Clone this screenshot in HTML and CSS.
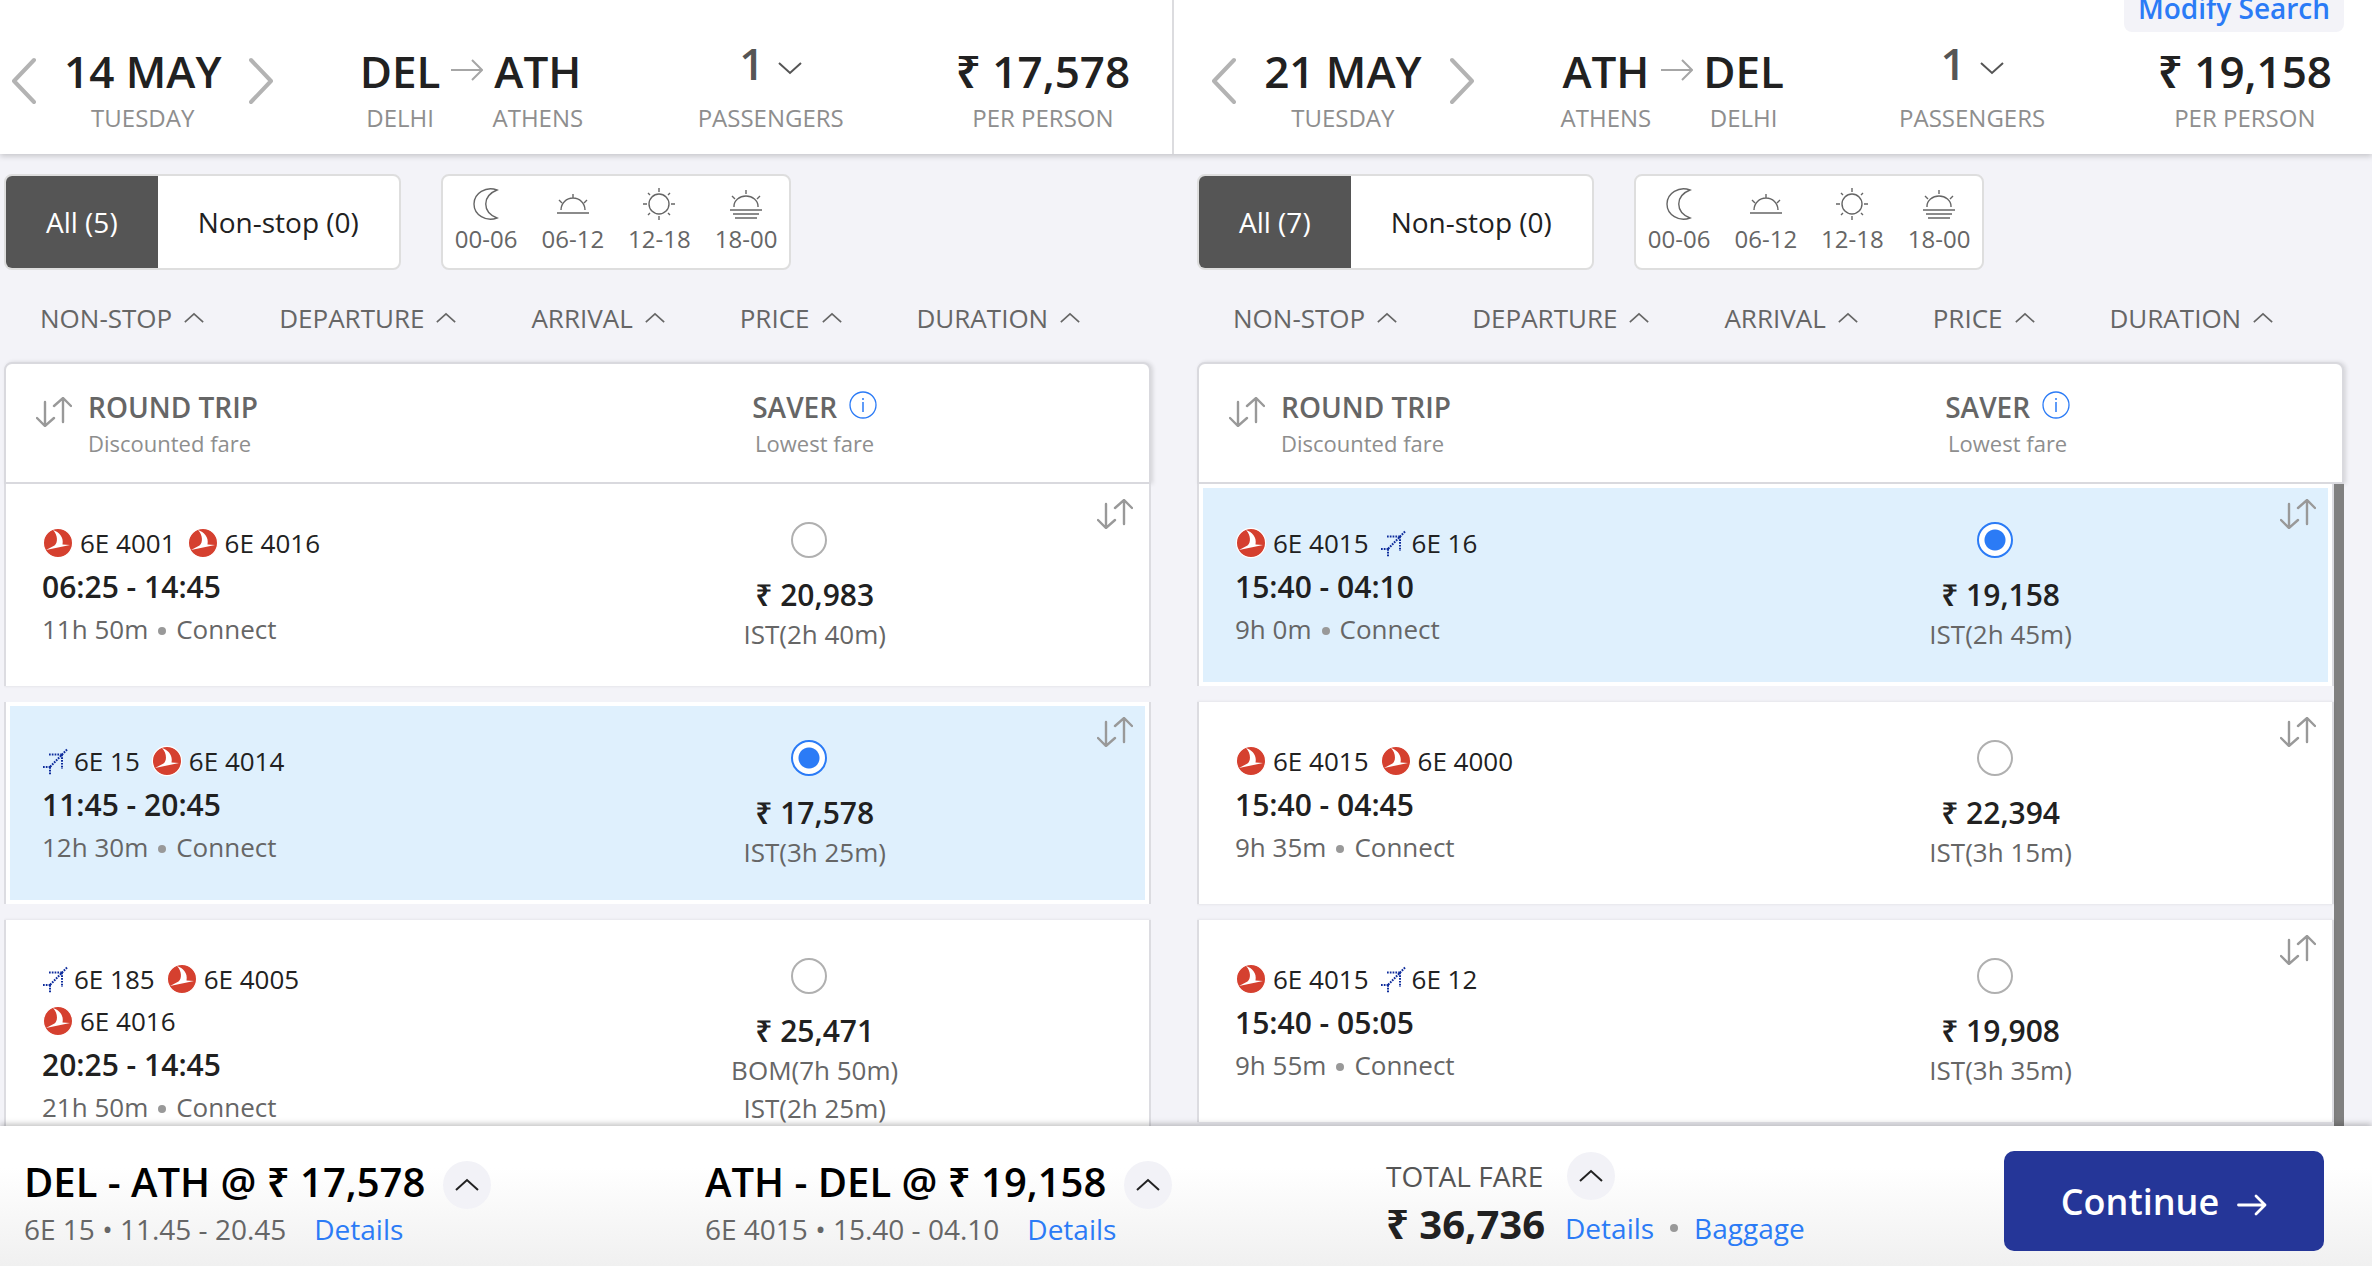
FILE: index.html
```html
<!DOCTYPE html>
<html lang="en">
<head>
<meta charset="utf-8">
<title>Select flights</title>
<link rel="stylesheet" href="styles.css">
</head>
<body>
<svg class="sprite" aria-hidden="true">
  <symbol id="chev-left" viewBox="0 0 24 48"><path d="M22 3 2 24 22 45" fill="none" stroke="currentColor" stroke-width="4" stroke-linecap="round" stroke-linejoin="round"/></symbol>
  <symbol id="chev-right" viewBox="0 0 24 48"><path d="M2 3 22 24 2 45" fill="none" stroke="currentColor" stroke-width="4" stroke-linecap="round" stroke-linejoin="round"/></symbol>
  <symbol id="chev-down" viewBox="0 0 24 14"><path d="M1 2 12 12 23 2" fill="none" stroke="currentColor" stroke-width="2"/></symbol>
  <symbol id="chev-up" viewBox="0 0 24 14"><path d="M1 12 12 2 23 12" fill="none" stroke="currentColor" stroke-width="2"/></symbol>
  <symbol id="arrow" viewBox="0 0 32 22"><path d="M0 11H31M21 1 31 11 21 21" fill="none" stroke="currentColor" stroke-width="2"/></symbol>
  <symbol id="arrow-bold" viewBox="0 0 30 22"><path d="M1.500 11H28M19 2 28 11 19 20" fill="none" stroke="currentColor" stroke-width="2.800" stroke-linecap="round" stroke-linejoin="round"/></symbol>
  <symbol id="swap" viewBox="0 0 36 30"><path d="M9 5V29M1 21 9 29 18 21M27 1V25M18 9 27 1 35 9" fill="none" stroke="currentColor" stroke-width="2.400" stroke-linecap="round"/></symbol>
  <symbol id="info" viewBox="0 0 28 28"><circle cx="14" cy="14" r="13" fill="none" stroke="currentColor" stroke-width="1.3"/><path d="M14 11V21M14 7V9" stroke="currentColor" stroke-width="1.5"/></symbol>
  <symbol id="moon" viewBox="0 0 32 32"><path d="M27 2C16-2 4 5 4 16S16 34 27 30C12 24 12 8 27 2Z" fill="none" stroke="currentColor" stroke-width="1.4"/></symbol>
  <symbol id="sunrise" viewBox="0 0 32 32"><path d="M0 25H32M4 22A12 12 0 0 1 28 22M16 6V10M2 12 5 15M30 12 27 15" fill="none" stroke="currentColor" stroke-width="1.4"/></symbol>
  <symbol id="sun" viewBox="0 0 32 32"><g fill="none" stroke="currentColor" stroke-width="1.4"><circle cx="16" cy="16" r="10"/><path d="M16 0V4M16 28V32M0 16H4M28 16H32M5 5 7 7M25 25 27 27M27 5 25 7M7 25 5 27"/></g></symbol>
  <symbol id="sunset" viewBox="0 0 32 32"><path d="M0 22H32M3 26H29M5 30H27M4 19V18A12 10 0 0 1 28 18V19M16 2V6M2 8 5 11M30 8 27 11" fill="none" stroke="currentColor" stroke-width="1.4"/></symbol>
  <symbol id="crane" viewBox="0 0 32 32"><circle cx="16" cy="16" r="14.6" fill="#d5402f" stroke="#fff" stroke-width="1.2"/><path d="M11 3C17 5 22 10 20.500 17.500L28 18 4 23 12.500 18.500C16 16 16 8 11 3Z" fill="#fff"/></symbol>
  <symbol id="dots" viewBox="0 0 26 27"><path d="M25 1.500 8 19M7 6.500H20M20 6.500V21M1 19H8M8 19V27" fill="none" stroke="#0e2c9c" stroke-width="2" stroke-dasharray="1.700 1.100"/></symbol>
</svg>

<header class="top">
  <section class="leg">
    <div class="date">
      <button class="step" aria-label="Previous day"><svg><use href="#chev-left"/></svg></button>
      <div class="stack"><strong class="big">14 MAY</strong><span class="cap">TUESDAY</span></div>
      <button class="step" aria-label="Next day"><svg><use href="#chev-right"/></svg></button>
    </div>
    <div class="route">
      <div class="stack"><strong class="big">DEL</strong><span class="cap">DELHI</span></div>
      <svg class="to"><use href="#arrow"/></svg>
      <div class="stack"><strong class="big">ATH</strong><span class="cap">ATHENS</span></div>
    </div>
    <div class="stack pax"><button class="count">1 <svg><use href="#chev-down"/></svg></button><span class="cap">PASSENGERS</span></div>
    <div class="stack price"><strong class="big">₹ 17,578</strong><span class="cap">PER PERSON</span></div>
  </section>
  <section class="leg leg--return">
    <div class="date">
      <button class="step" aria-label="Previous day"><svg><use href="#chev-left"/></svg></button>
      <div class="stack"><strong class="big">21 MAY</strong><span class="cap">TUESDAY</span></div>
      <button class="step" aria-label="Next day"><svg><use href="#chev-right"/></svg></button>
    </div>
    <div class="route">
      <div class="stack"><strong class="big">ATH</strong><span class="cap">ATHENS</span></div>
      <svg class="to"><use href="#arrow"/></svg>
      <div class="stack"><strong class="big">DEL</strong><span class="cap">DELHI</span></div>
    </div>
    <div class="stack pax"><button class="count">1 <svg><use href="#chev-down"/></svg></button><span class="cap">PASSENGERS</span></div>
    <div class="stack price"><strong class="big">₹ 19,158</strong><span class="cap">PER PERSON</span></div>
  </section>
  <button class="modify">Modify Search</button>
</header>

<main class="panes">
  <section class="pane">
    <div class="filters">
      <div class="tabs"><button class="tab tab--on">All (5)</button><button class="tab">Non-stop (0)</button></div>
      <div class="times">
        <button class="time"><svg><use href="#moon"/></svg>00-06</button>
        <button class="time"><svg><use href="#sunrise"/></svg>06-12</button>
        <button class="time"><svg><use href="#sun"/></svg>12-18</button>
        <button class="time"><svg><use href="#sunset"/></svg>18-00</button>
      </div>
    </div>
    <div class="sorts">
      <button class="sort">NON-STOP<svg><use href="#chev-up"/></svg></button>
      <button class="sort">DEPARTURE<svg><use href="#chev-up"/></svg></button>
      <button class="sort">ARRIVAL<svg><use href="#chev-up"/></svg></button>
      <button class="sort">PRICE<svg><use href="#chev-up"/></svg></button>
      <button class="sort">DURATION<svg><use href="#chev-up"/></svg></button>
    </div>
    <div class="head">
      <div class="trip"><svg class="swap"><use href="#swap"/></svg><div><h2 class="title">ROUND TRIP</h2><p class="note">Discounted fare</p></div></div>
      <div class="saver"><h2 class="title">SAVER<svg class="info"><use href="#info"/></svg></h2><p class="note">Lowest fare</p></div>
    </div>
    <div class="scroller">
      <div class="list">
        <label class="flight">
          <span class="info-col">
            <span class="codes"><span class="code"><svg class="crane"><use href="#crane"/></svg>6E 4001</span><span class="code"><svg class="crane"><use href="#crane"/></svg>6E 4016</span></span>
            <strong class="hours">06:25 - 14:45</strong>
            <span class="length">11h 50m<i class="dot"></i>Connect</span>
          </span>
          <span class="fare"><input class="pick" type="radio" name="out"><strong class="amount">₹ 20,983</strong><span class="stop">IST(2h 40m)</span></span>
          <svg class="swap"><use href="#swap"/></svg>
        </label>
        <label class="flight flight--on">
          <span class="info-col">
            <span class="codes"><span class="code"><svg class="dots"><use href="#dots"/></svg>6E 15</span><span class="code"><svg class="crane"><use href="#crane"/></svg>6E 4014</span></span>
            <strong class="hours">11:45 - 20:45</strong>
            <span class="length">12h 30m<i class="dot"></i>Connect</span>
          </span>
          <span class="fare"><input class="pick" type="radio" name="out" checked><strong class="amount">₹ 17,578</strong><span class="stop">IST(3h 25m)</span></span>
          <svg class="swap"><use href="#swap"/></svg>
        </label>
        <label class="flight">
          <span class="info-col">
            <span class="codes"><span class="code"><svg class="dots"><use href="#dots"/></svg>6E 185</span><span class="code"><svg class="crane"><use href="#crane"/></svg>6E 4005</span><span class="code"><svg class="crane"><use href="#crane"/></svg>6E 4016</span></span>
            <strong class="hours">20:25 - 14:45</strong>
            <span class="length">21h 50m<i class="dot"></i>Connect</span>
          </span>
          <span class="fare"><input class="pick" type="radio" name="out"><strong class="amount">₹ 25,471</strong><span class="stop">BOM(7h 50m)</span><span class="stop">IST(2h 25m)</span></span>
        </label>
      </div>
    </div>
  </section>

  <section class="pane">
    <div class="filters">
      <div class="tabs"><button class="tab tab--on">All (7)</button><button class="tab">Non-stop (0)</button></div>
      <div class="times">
        <button class="time"><svg><use href="#moon"/></svg>00-06</button>
        <button class="time"><svg><use href="#sunrise"/></svg>06-12</button>
        <button class="time"><svg><use href="#sun"/></svg>12-18</button>
        <button class="time"><svg><use href="#sunset"/></svg>18-00</button>
      </div>
    </div>
    <div class="sorts">
      <button class="sort">NON-STOP<svg><use href="#chev-up"/></svg></button>
      <button class="sort">DEPARTURE<svg><use href="#chev-up"/></svg></button>
      <button class="sort">ARRIVAL<svg><use href="#chev-up"/></svg></button>
      <button class="sort">PRICE<svg><use href="#chev-up"/></svg></button>
      <button class="sort">DURATION<svg><use href="#chev-up"/></svg></button>
    </div>
    <div class="head">
      <div class="trip"><svg class="swap"><use href="#swap"/></svg><div><h2 class="title">ROUND TRIP</h2><p class="note">Discounted fare</p></div></div>
      <div class="saver"><h2 class="title">SAVER<svg class="info"><use href="#info"/></svg></h2><p class="note">Lowest fare</p></div>
    </div>
    <div class="scroller">
      <div class="list">
        <label class="flight flight--on">
          <span class="info-col">
            <span class="codes"><span class="code"><svg class="crane"><use href="#crane"/></svg>6E 4015</span><span class="code"><svg class="dots"><use href="#dots"/></svg>6E 16</span></span>
            <strong class="hours">15:40 - 04:10</strong>
            <span class="length">9h 0m<i class="dot"></i>Connect</span>
          </span>
          <span class="fare"><input class="pick" type="radio" name="back" checked><strong class="amount">₹ 19,158</strong><span class="stop">IST(2h 45m)</span></span>
          <svg class="swap"><use href="#swap"/></svg>
        </label>
        <label class="flight">
          <span class="info-col">
            <span class="codes"><span class="code"><svg class="crane"><use href="#crane"/></svg>6E 4015</span><span class="code"><svg class="crane"><use href="#crane"/></svg>6E 4000</span></span>
            <strong class="hours">15:40 - 04:45</strong>
            <span class="length">9h 35m<i class="dot"></i>Connect</span>
          </span>
          <span class="fare"><input class="pick" type="radio" name="back"><strong class="amount">₹ 22,394</strong><span class="stop">IST(3h 15m)</span></span>
          <svg class="swap"><use href="#swap"/></svg>
        </label>
        <label class="flight">
          <span class="info-col">
            <span class="codes"><span class="code"><svg class="crane"><use href="#crane"/></svg>6E 4015</span><span class="code"><svg class="dots"><use href="#dots"/></svg>6E 12</span></span>
            <strong class="hours">15:40 - 05:05</strong>
            <span class="length">9h 55m<i class="dot"></i>Connect</span>
          </span>
          <span class="fare"><input class="pick" type="radio" name="back"><strong class="amount">₹ 19,908</strong><span class="stop">IST(3h 35m)</span></span>
          <svg class="swap"><use href="#swap"/></svg>
        </label>
      </div>
      <div class="bar"></div>
    </div>
  </section>
</main>

<footer class="summary">
  <section class="pickup">
    <div class="line"><strong class="sum">DEL - ATH @ ₹ 17,578</strong><button class="open" aria-label="Expand"><svg><use href="#chev-up"/></svg></button></div>
    <div class="meta">6E 15 • 11.45 - 20.45<a class="link" href="#">Details</a></div>
  </section>
  <section class="pickup">
    <div class="line"><strong class="sum">ATH - DEL @ ₹ 19,158</strong><button class="open" aria-label="Expand"><svg><use href="#chev-up"/></svg></button></div>
    <div class="meta">6E 4015 • 15.40 - 04.10<a class="link" href="#">Details</a></div>
  </section>
  <section class="total">
    <div class="line"><span class="total-cap">TOTAL FARE</span><button class="open" aria-label="Expand"><svg><use href="#chev-up"/></svg></button></div>
    <div class="total-row"><strong class="total-sum">₹ 36,736</strong><a class="link" href="#">Details</a><i class="dot"></i><a class="link" href="#">Baggage</a></div>
  </section>
  <button class="go">Continue<svg><use href="#arrow-bold"/></svg></button>
</footer>
</body>
</html>
```
FILE: styles.css
```css
* { box-sizing: border-box; }

body {
  margin: 0;
  height: 100vh;
  display: flex;
  flex-direction: column;
  overflow: hidden;
  background: #f3f3f8;
  color: #212121;
  font-family: "Open Sans", "Noto Sans", sans-serif;
  font-size: 26px;
}

button {
  margin: 0;
  padding: 0;
  border: 0;
  background: none;
  color: inherit;
  font: inherit;
  cursor: pointer;
}

h2, p { margin: 0; }
a { color: #2b7bf6; text-decoration: none; }
svg { display: block; flex: none; }
strong { font-weight: 600; }
.sprite { position: absolute; width: 0; height: 0; }

/* Search header */
.top {
  position: relative;
  z-index: 2;
  display: grid;
  grid-template-columns: 495fr 505fr;
  flex: none;
  background: #fff;
  box-shadow: 0 2px 6px rgba(0, 0, 0, .2);
}
.leg {
  display: grid;
  grid-template-columns: 349fr 337fr 261fr 173fr;
  justify-items: start;
  padding: 41px 42px 19px 12px;
  border-right: 2px solid #dcdcdf;
  white-space: nowrap;
}
.leg--return { padding: 41px 40px 19px 38px; border-right: 0; }
.date { display: flex; gap: 28px; }
.step { align-self: flex-start; margin-top: 16px; color: #b3b3b3; }
.step svg { width: 24px; height: 48px; }
.stack { display: flex; flex-direction: column; align-items: center; }
.big { font-size: 44px; line-height: 60px; }
.cap { color: #8e8e8e; font-size: 24px; line-height: 34px; }
.route { display: flex; gap: 10px; }
.to { width: 32px; height: 22px; margin-top: 18px; color: #a6a6a6; }
.pax { margin-left: 2px; }
.count {
  display: flex;
  align-items: center;
  gap: 14px;
  margin-bottom: 16px;
  color: #555;
  font-size: 44px;
  font-weight: 600;
  line-height: 44px;
}
.count svg { width: 24px; height: 14px; margin-top: 10px; }
.price { justify-self: end; }
.modify {
  position: absolute;
  top: -16px;
  right: 28px;
  width: 220px;
  height: 48px;
  border-radius: 8px;
  background: #f3f3f8;
  color: #2b7bf6;
  font-size: 28px;
  font-weight: 600;
  white-space: nowrap;
}

/* Result panes */
.panes {
  display: grid;
  grid-template-columns: 1fr 1fr;
  grid-template-rows: minmax(0, 1fr);
  gap: 46px;
  flex: 1;
  min-height: 0;
  padding: 20px 28px 0 4px;
}
.pane { display: flex; flex-direction: column; min-width: 0; white-space: nowrap; }
.filters { display: flex; gap: 40px; flex: none; }
.tabs, .times {
  display: flex;
  height: 96px;
  overflow: hidden;
  border: 2px solid #dedede;
  border-radius: 8px;
  background: #fff;
}
.tab { padding: 0 40px; font-size: 28px; }
.tab--on { background: #555; color: #fff; }
.times { gap: 24px; padding: 0 12px; }
.time {
  display: flex;
  flex-direction: column;
  align-items: center;
  gap: 2px;
  padding-top: 12px;
  color: #666;
  font-size: 24px;
  line-height: 34px;
}
.time svg { width: 32px; height: 32px; }
.sorts { display: flex; gap: 75px; flex: none; padding: 27px 36px 23px; }
.sort { display: flex; align-items: center; gap: 12px; color: #666; font-size: 26px; line-height: 42px; }
.sort svg { width: 20px; height: 14px; }

.head {
  display: grid;
  grid-template-columns: 223fr 120fr 57fr;
  flex: none;
  height: 122px;
  padding-top: 23px;
  border: 2px solid #d9d9de;
  border-radius: 8px 8px 0 0;
  background: #fff;
  box-shadow: 2px 0 4px rgba(0, 0, 0, .12);
}
.trip { display: flex; gap: 16px; padding-left: 30px; }
.swap { width: 36px; height: 30px; color: #999; }
.trip .swap { margin-top: 10px; }
.title {
  display: flex;
  align-items: center;
  gap: 12px;
  color: #666;
  font-size: 28px;
  font-weight: 600;
  line-height: 40px;
}
.info { width: 28px; height: 28px; margin-bottom: 4px; color: #2b7bf6; }
.note { color: #8e8e8e; font-size: 22px; line-height: 32px; }
.saver { display: flex; flex-direction: column; align-items: center; }

.scroller { display: flex; flex: 1; min-height: 0; overflow: hidden; }
.list { display: flex; flex-direction: column; gap: 16px; flex: 1; }
.bar { width: 10px; background: #808080; }

.flight {
  position: relative;
  display: grid;
  grid-template-columns: 223fr 120fr 57fr;
  flex: none;
  min-height: 202px;
  padding: 38px 0 32px;
  border: solid #dcdce1;
  border-width: 0 2px;
  background: #fff;
  box-shadow: 0 0 3px rgba(0, 0, 0, .1);
}
.flight--on { background: #dff0fd; box-shadow: inset 0 0 0 4px #fff; }
.flight > .swap { position: absolute; top: 15px; right: 16px; }
.info-col { display: flex; flex-direction: column; padding-left: 36px; }
.codes { display: flex; flex-wrap: wrap; column-gap: 11px; max-width: 340px; }
.code { display: flex; align-items: center; gap: 6px; font-size: 26px; line-height: 42px; }
.crane { width: 32px; height: 32px; }
.dots { width: 26px; height: 27px; }
.hours { font-size: 30px; line-height: 46px; }
.length { display: flex; align-items: center; color: #666; line-height: 38px; }
.dot { width: 8px; height: 8px; margin: 4px 10px 0; border-radius: 50%; background: #999; }
.fare { display: flex; flex-direction: column; align-items: center; }
.pick {
  appearance: none;
  width: 36px;
  height: 36px;
  margin: 0 12px 17px 0;
  border: 2px solid #b0b0b0;
  border-radius: 50%;
  background: #fff;
}
.pick:checked { border-color: #2b7bf6; background: radial-gradient(circle, #2b7bf6 10px, #fff 11px); }
.amount { font-size: 30px; line-height: 40px; }
.stop { color: #666; line-height: 38px; }

/* Fare summary */
.summary {
  position: relative;
  z-index: 2;
  display: grid;
  grid-template-columns: 681fr 681fr 618fr 320px;
  flex: none;
  height: 140px;
  padding: 0 48px 0 24px;
  background: linear-gradient(#fff 30%, #f0f0f0);
  box-shadow: 0 -2px 6px rgba(0, 0, 0, .25);
  white-space: nowrap;
}
.pickup { padding-top: 29px; }
.line { display: flex; align-items: center; gap: 18px; height: 52px; }
.sum { color: #000; font-size: 40px; }
.open { display: grid; place-items: center; width: 48px; height: 48px; border-radius: 50%; background: #f2f2f7; }
.pickup .open { margin-top: 8px; }
.open svg { width: 24px; height: 14px; color: #222; }
.meta { color: #666; font-size: 28px; line-height: 44px; }
.meta .link { margin-left: 28px; }
.link { font-size: 28px; }
.total { padding-top: 24px; }
.total .line { gap: 24px; }
.total-cap { color: #555; font-size: 28px; font-weight: 500; }
.total-row { display: flex; align-items: baseline; line-height: 44px; }
.total-sum { margin-right: 20px; font-size: 40px; font-weight: 700; }
.total-row .dot { align-self: center; margin: 4px 16px 0; }
.go {
  display: flex;
  align-items: center;
  justify-content: center;
  gap: 18px;
  align-self: start;
  height: 100px;
  margin-top: 25px;
  border-radius: 10px;
  background: #253698;
  color: #fff;
  font-size: 36px;
  font-weight: 600;
}
.go svg { width: 30px; height: 22px; margin-top: 8px; }
```
